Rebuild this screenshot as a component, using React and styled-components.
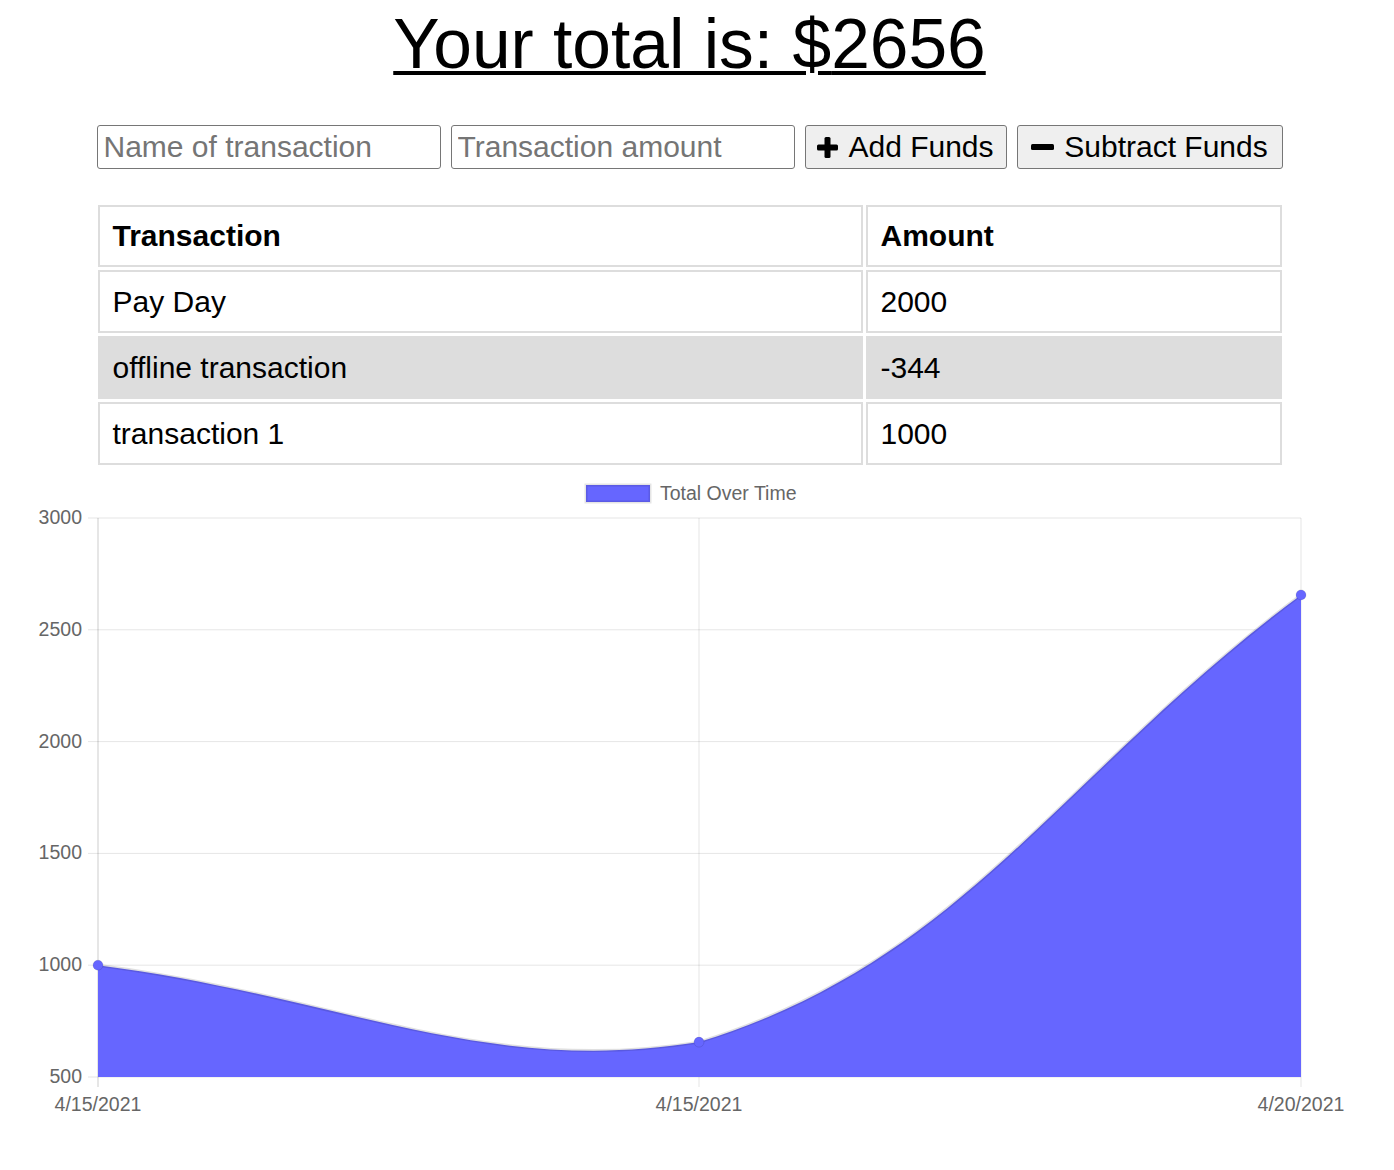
import React from "react";
import styled, { createGlobalStyle } from "styled-components";

const GlobalStyle = createGlobalStyle`
  body {
    margin: 0;
    background: #fff;
    font-family: "Liberation Sans", Arial, sans-serif;
  }
`;

const transactions = [
  { name: "Pay Day", value: 2000 },
  { name: "offline transaction", value: -344 },
  { name: "transaction 1", value: 1000 },
];

// chart geometry, in page pixels
const TOP = 470;
const X = [98, 699, 1301];
const yFor = (v) => 1077 - ((v - 500) / 500) * 111.8 - TOP;
const yTicks = [3000, 2500, 2000, 1500, 1000, 500];
const points = [
  { x: X[0], y: yFor(1000) },
  { x: X[1], y: yFor(656) },
  { x: X[2], y: yFor(2656) },
];

const PlusIcon = () => (
  <svg width="21" height="21" viewBox="0 0 21 21">
    <rect x="7.5" y="0" width="6" height="21" rx="1.5" fill="#000" />
    <rect x="0" y="7.5" width="21" height="6" rx="1.5" fill="#000" />
  </svg>
);

const MinusIcon = () => (
  <svg width="23" height="6" viewBox="0 0 23 6">
    <rect x="0" y="0" width="23" height="6" rx="1.5" fill="#000" />
  </svg>
);

const App = () => {
  const total = transactions.reduce((s, t) => s + t.value, 0);
  const bottom = yFor(500);
  const curve = `M${points[0].x},${points[0].y} C338.4,${points[0].y + 30.8} 483.9,${bottom} ${points[1].x},${points[1].y} C965.1,${points[1].y - 81.8} 1060.2,${points[2].y + 178.8} ${points[2].x},${points[2].y}`;

  return (
    <Page>
      <GlobalStyle />
      <Total>Your total is: ${total}</Total>

      <Form>
        <Field placeholder="Name of transaction" />
        <Field placeholder="Transaction amount" />
        <FundButton $w={202}>
          <PlusIcon /> Add Funds
        </FundButton>
        <FundButton $w={266}>
          <MinusIcon /> Subtract Funds
        </FundButton>
      </Form>

      <Table>
        <thead>
          <tr>
            <Th $first>Transaction</Th>
            <Th>Amount</Th>
          </tr>
        </thead>
        <tbody>
          {transactions.map((t, i) => (
            <Row key={i} $shade={i % 2 === 1}>
              <Td>{t.name}</Td>
              <Td>{t.value}</Td>
            </Row>
          ))}
        </tbody>
      </Table>

      <Chart width="1379" height="680" viewBox="0 0 1379 680">
        <rect x="586" y={485 - TOP} width="64" height="17" fill="#6666ff" stroke="rgba(0,0,0,0.1)" strokeWidth="3" />
        <ChartText x="660" y={500 - TOP}>Total Over Time</ChartText>

        {yTicks.map((v) => (
          <g key={v}>
            <line x1="88" x2="1301" y1={yFor(v)} y2={yFor(v)} stroke="rgba(0,0,0,0.1)" strokeWidth="1" />
            <ChartText x="82" y={yFor(v) + 6} textAnchor="end">{v}</ChartText>
          </g>
        ))}
        {X.map((x, i) => (
          <g key={i}>
            <line x1={x} x2={x} y1={yFor(3000)} y2={bottom + 10} stroke={i === 0 ? "rgba(0,0,0,0.2)" : "rgba(0,0,0,0.1)"} strokeWidth="1" />
            <ChartText x={x} y={1111 - TOP} textAnchor="middle">{i === 2 ? "4/20/2021" : "4/15/2021"}</ChartText>
          </g>
        ))}

        <path d={`${curve} L${X[2]},${bottom} L${X[0]},${bottom} Z`} fill="#6666ff" />
        <path d={curve} fill="none" stroke="rgba(0,0,0,0.12)" strokeWidth="3" />
        {points.map((p, i) => (
          <circle key={i} cx={p.x} cy={p.y} r="5" fill="#6666ff" stroke="rgba(0,0,0,0.1)" strokeWidth="1" />
        ))}
      </Chart>
    </Page>
  );
};

export default App;

const Page = styled.div`
  width: 1379px;
  display: flex;
  flex-direction: column;
  align-items: center;
`;

const Total = styled.h1`
  margin: 5px 0 0 0;
  font-size: 69.5px;
  font-weight: normal;
  line-height: 78px;
  text-decoration: underline;
  text-decoration-thickness: 4px;
  text-underline-offset: 3px;
  color: #000;
`;

const Form = styled.div`
  display: flex;
  gap: 10px;
  margin-top: 42px;
`;

const Field = styled.input`
  box-sizing: border-box;
  width: 344px;
  height: 44px;
  padding: 0 6px;
  border: 1px solid #767676;
  border-radius: 3px;
  font-family: "Liberation Sans", Arial, sans-serif;
  font-size: 30px;
  color: #000;

  &::placeholder {
    color: #757575;
  }
`;

const FundButton = styled.button`
  box-sizing: border-box;
  width: ${(p) => p.$w}px;
  height: 44px;
  display: flex;
  align-items: center;
  justify-content: center;
  gap: 10px;
  padding: 0 8px;
  border: 1px solid #767676;
  border-radius: 3px;
  background: #efefef;
  font-family: "Liberation Sans", Arial, sans-serif;
  font-size: 30px;
  color: #000;
`;

const Table = styled.table`
  margin-top: 33px;
  width: 1190px;
  border-spacing: 3px;
  font-size: 30px;
`;

const Row = styled.tr`
  background: ${(p) => (p.$shade ? "#dddddd" : "transparent")};
`;

const Th = styled.th`
  box-sizing: border-box;
  width: ${(p) => (p.$first ? "765px" : "auto")};
  padding: 0 13px;
  line-height: 58px;
  border: 2px solid #dddddd;
  text-align: left;
  font-weight: bold;
`;

const Td = styled.td`
  padding: 0 13px;
  line-height: 59px;
  border: 2px solid #dddddd;
`;

const Chart = styled.svg`
  display: block;
  margin-top: 2px;
`;

const ChartText = styled.text`
  font-family: "Liberation Sans", Arial, sans-serif;
  font-size: 19.5px;
  fill: #666666;
`;
